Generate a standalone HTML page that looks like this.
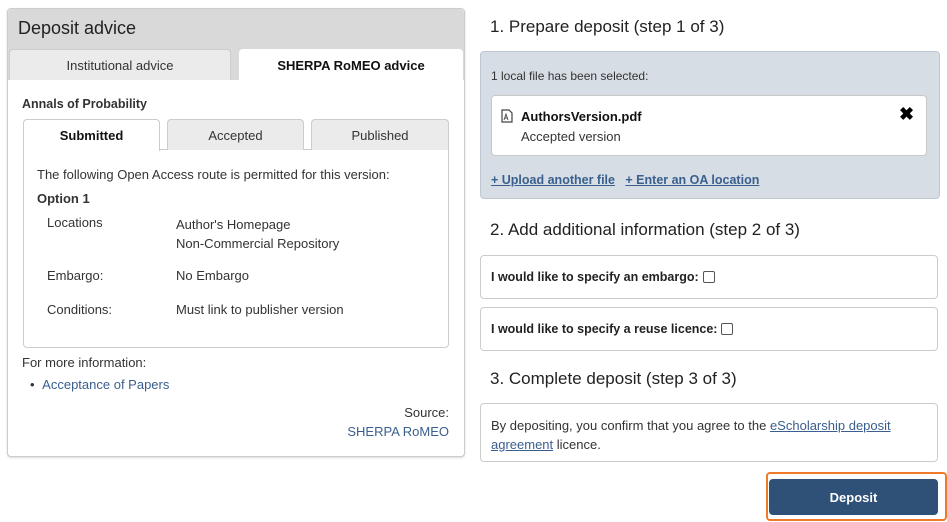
<!DOCTYPE html>
<html><head><meta charset="utf-8"><style>
*{box-sizing:border-box;margin:0;padding:0}
body{width:947px;height:522px;background:#fff;font-family:"Liberation Sans",sans-serif;color:#333;position:relative;overflow:hidden;font-size:13px}
.a{position:absolute}
.tab{position:absolute;display:flex;align-items:center;justify-content:center;border:1px solid #ccc;border-bottom:none;border-radius:4px 4px 0 0;font-size:13px}
.box{position:absolute;border:1px solid #ccc;border-radius:4px;background:#fff}
a{color:#3a5f8e;text-decoration:underline}
.h{position:absolute;left:490px;font-size:17px;color:#222}
.cb{display:inline-block;width:12px;height:12px;border:1px solid #555;border-radius:2px;vertical-align:-2px;margin-left:4px}
</style></head><body>
<div class="a" style="left:7px;top:8px;width:458px;height:449px;border:1px solid #ccc;border-radius:4px;background:#fff;box-shadow:0 1px 2px rgba(0,0,0,.15)"></div>
<div class="a" style="left:8px;top:9px;width:456px;height:71px;background:#d9d9d9;border-radius:4px 4px 0 0"></div>
<div class="a" style="left:18px;top:18px;font-size:18px;color:#222">Deposit advice</div>
<div class="tab" style="left:9px;top:49px;width:222px;height:31px;background:#ebebeb">Institutional advice</div>
<div class="tab" style="left:239px;top:49px;width:224px;height:31px;background:#fff;border-color:#fff;font-weight:bold;color:#111">SHERPA RoMEO advice</div>
<div class="a" style="left:22px;top:97px;font-weight:bold;font-size:12.5px">Annals of Probability</div>
<div class="box" style="left:23px;top:149px;width:426px;height:199px;border-radius:0 0 4px 4px"></div>
<div class="tab" style="left:23px;top:119px;width:137px;height:32px;background:#fff;font-weight:bold;color:#111">Submitted</div>
<div class="tab" style="left:167px;top:119px;width:137px;height:31px;background:#ebebeb">Accepted</div>
<div class="tab" style="left:311px;top:119px;width:138px;height:31px;background:#ebebeb">Published</div>
<div class="a" style="left:37px;top:167px">The following Open Access route is permitted for this version:</div>
<div class="a" style="left:37px;top:191px;font-weight:bold">Option 1</div>
<div class="a" style="left:47px;top:215px">Locations</div>
<div class="a" style="left:176px;top:215px;line-height:19px">Author's Homepage<br>Non-Commercial Repository</div>
<div class="a" style="left:47px;top:268px">Embargo:</div>
<div class="a" style="left:176px;top:268px">No Embargo</div>
<div class="a" style="left:47px;top:302px">Conditions:</div>
<div class="a" style="left:176px;top:302px">Must link to publisher version</div>
<div class="a" style="left:22px;top:355px">For more information:</div>
<div class="a" style="left:30px;top:377px">• <span style="color:#3a5f8e;margin-left:4px">Acceptance of Papers</span></div>
<div class="a" style="left:300px;top:405px;width:149px;text-align:right">Source:</div>
<div class="a" style="left:300px;top:424px;width:149px;text-align:right;color:#3a5f8e">SHERPA RoMEO</div>

<div class="h" style="top:17px">1. Prepare deposit (step 1 of 3)</div>
<div class="a" style="left:480px;top:51px;width:460px;height:148px;background:#d6dde4;border:1px solid #bfc8d2;border-radius:4px"></div>
<div class="a" style="left:491px;top:69px;font-size:12px">1 local file has been selected:</div>
<div class="box" style="left:491px;top:95px;width:436px;height:61px;border-color:#c8c8c8"></div>
<svg class="a" style="left:501px;top:109px" width="12" height="14" viewBox="0 0 12 14"><path d="M1 1h7l3 3v9H1z" fill="none" stroke="#444" stroke-width="1.2"/><path d="M3 11l2-6 2 6M4 9h2" fill="none" stroke="#444" stroke-width=".9"/></svg>
<div class="a" style="left:521px;top:109px;font-weight:bold;color:#111">AuthorsVersion.pdf</div>
<div class="a" style="left:521px;top:129px">Accepted version</div>
<div class="a" style="left:899px;top:104px;font-size:18px;font-weight:bold;color:#000">✖</div>
<div class="a" style="left:491px;top:173px;font-weight:bold;font-size:12.5px"><a>+ Upload another file</a>&nbsp;&nbsp;&nbsp;<a>+ Enter an OA location</a></div>

<div class="h" style="top:220px">2. Add additional information (step 2 of 3)</div>
<div class="box" style="left:480px;top:255px;width:458px;height:44px"></div>
<div class="a" style="left:491px;top:270px;font-weight:bold;font-size:12.5px;color:#222">I would like to specify an embargo:<span class="cb"></span></div>
<div class="box" style="left:480px;top:307px;width:458px;height:44px"></div>
<div class="a" style="left:491px;top:322px;font-weight:bold;font-size:12.5px;color:#222">I would like to specify a reuse licence:<span class="cb"></span></div>

<div class="h" style="top:369px">3. Complete deposit (step 3 of 3)</div>
<div class="box" style="left:480px;top:403px;width:458px;height:59px"></div>
<div class="a" style="left:491px;top:416px;line-height:19px">By depositing, you confirm that you agree to the <a>eScholarship deposit</a><br><a>agreement</a> licence.</div>
<div class="a" style="left:766px;top:472px;width:181px;height:49px;border:2px solid #f07a2a;border-radius:4px"></div>
<div class="a" style="left:769px;top:479px;width:169px;height:36px;background:#2f5077;border-radius:4px;color:#fff;font-weight:bold;display:flex;align-items:center;justify-content:center">Deposit</div>
</body></html>
